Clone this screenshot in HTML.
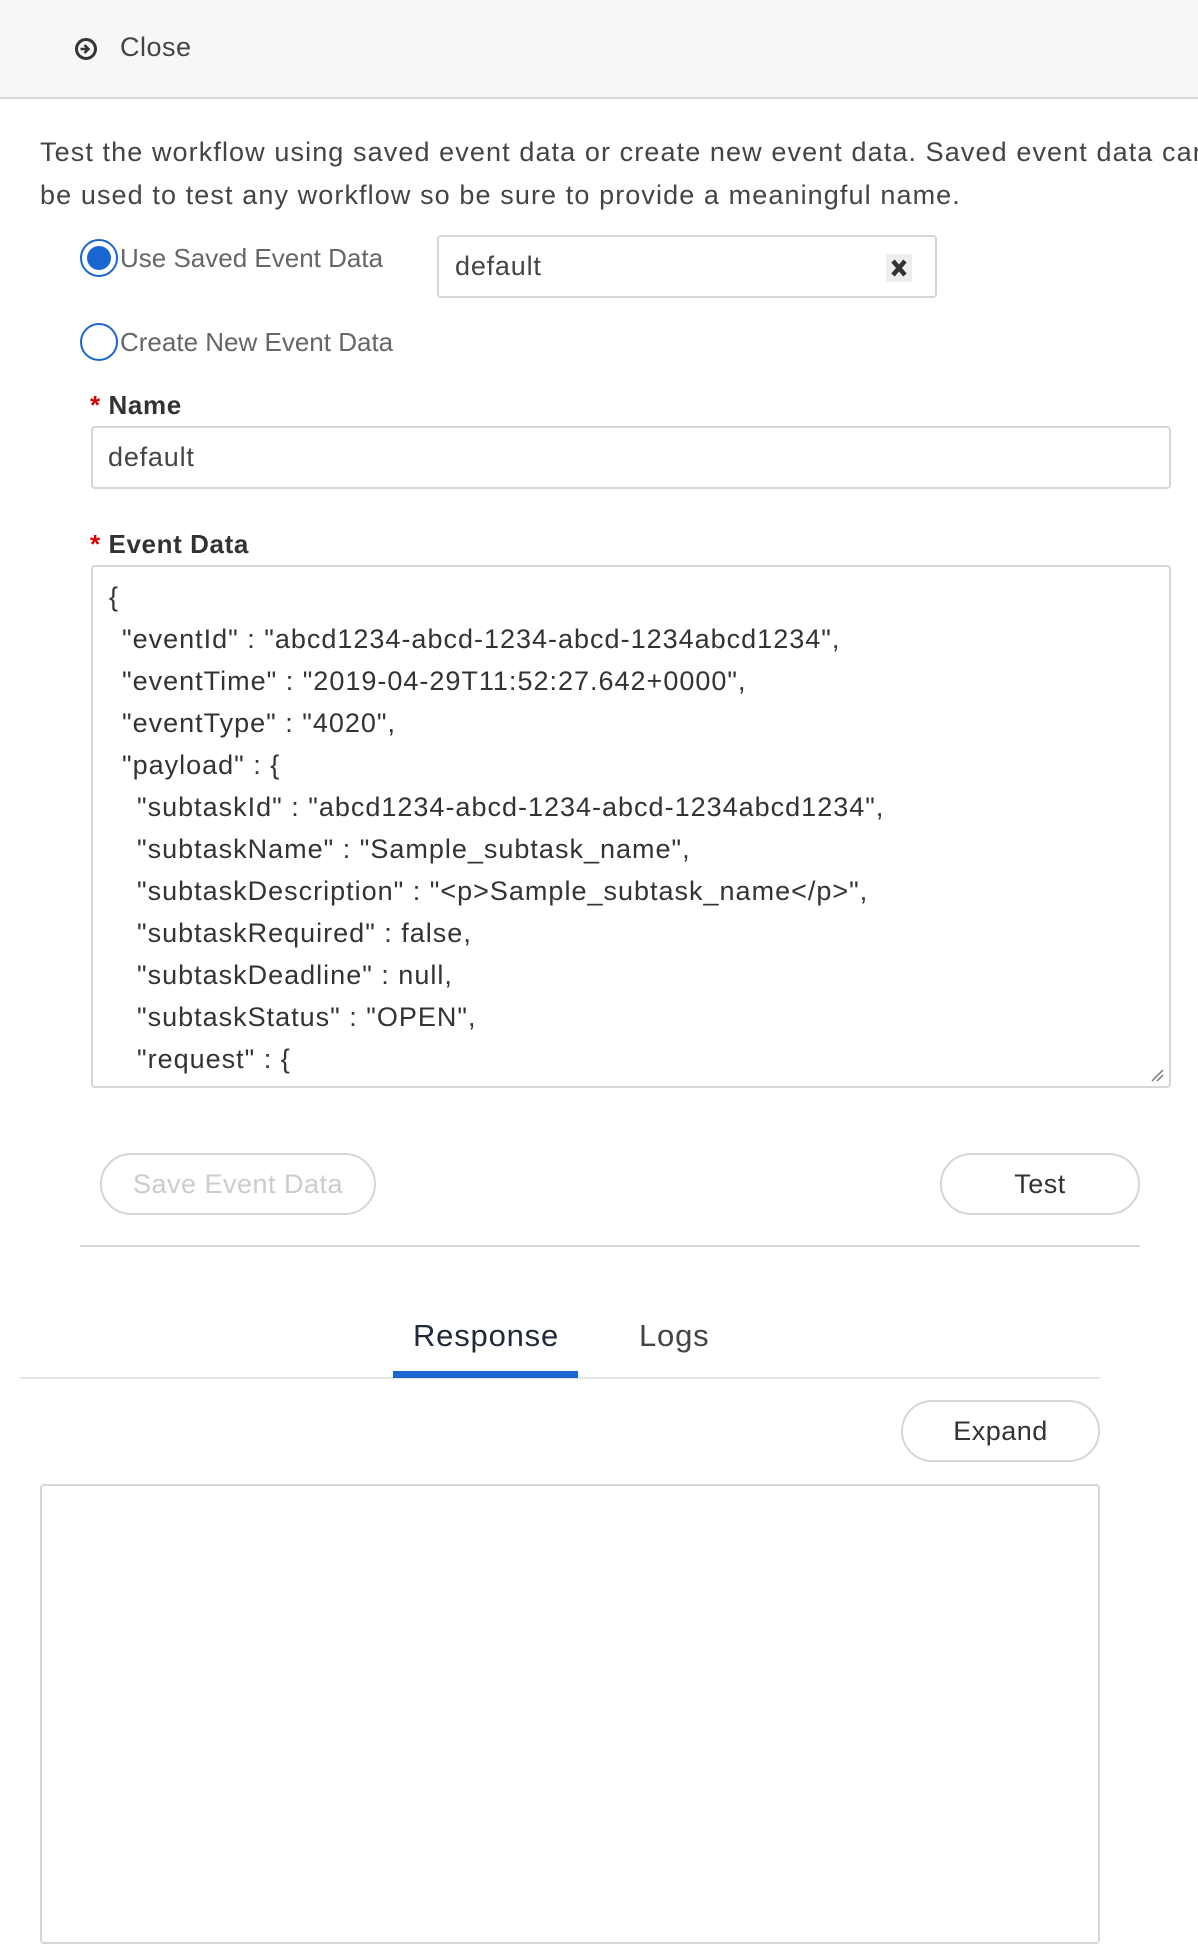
<!DOCTYPE html>
<html><head><meta charset="utf-8"><style>
body{margin:0;width:1198px;height:1918px;overflow:hidden;background:#fff;font-family:"Liberation Sans",sans-serif;color:#333;position:relative}
.a{position:absolute;white-space:nowrap}
.hdr{position:absolute;left:0;top:0;width:1198px;height:97px;background:#f7f7f7;border-bottom:2px solid #d9d9d9}
.box{position:absolute;border:2px solid #d6d6d6;border-radius:4px;box-sizing:border-box}
.radio{position:absolute;width:38px;height:38px;border:2px solid #1a66d1;border-radius:50%;box-sizing:border-box}
.btn{position:absolute;border:2px solid #d6d6d6;border-radius:31px;box-sizing:border-box;text-align:center;font-size:27px;line-height:58px;letter-spacing:.5px}
.code{position:absolute;left:109px;top:576px;font-size:27px;line-height:42px;color:#333;white-space:pre;letter-spacing:1px}
.code div.l1{padding-left:13px}.code div.l2{padding-left:28px}
</style></head><body>
<div class="hdr"></div>
<svg class="a" style="left:74px;top:37px" width="24" height="24" viewBox="0 0 24 24"><circle cx="12" cy="12" r="9.5" fill="none" stroke="#333" stroke-width="3"/><path d="M6.5 12h7M10.5 8l4 4-4 4" fill="none" stroke="#333" stroke-width="2.6"/></svg>
<div class="a" style="left:120px;top:32px;font-size:27px;color:#444;letter-spacing:.5px">Close</div>
<div class="a" style="left:40px;top:131px;font-size:27px;line-height:43px;color:#444;letter-spacing:1.1px">Test the workflow using saved event data or create new event data. Saved event data can<br>be used to test any workflow so be sure to provide a meaningful name.</div>
<div class="radio" style="left:80px;top:239px"></div>
<div class="a" style="left:87px;top:246px;width:24px;height:24px;border-radius:50%;background:#1a66d1"></div>
<div class="a" style="left:120px;top:243px;font-size:26px;color:#666">Use Saved Event Data</div>
<div class="box" style="left:437px;top:235px;width:500px;height:63px"></div>
<div class="a" style="left:455px;top:251px;font-size:27px;color:#444;letter-spacing:.8px">default</div>
<div class="a" style="left:886px;top:254px;width:26px;height:28px;background:#eee"></div>
<svg class="a" style="left:890px;top:258px" width="18" height="20" viewBox="0 0 18 20"><path d="M3 3l12 14M15 3L3 17" stroke="#333" stroke-width="4.5"/></svg>
<div class="radio" style="left:80px;top:323px"></div>
<div class="a" style="left:120px;top:327px;font-size:26px;color:#666">Create New Event Data</div>
<div class="a" style="left:90px;top:390px;font-size:26px;font-weight:bold;color:#333;letter-spacing:.6px"><span style="color:#d00">*</span> Name</div>
<div class="box" style="left:91px;top:426px;width:1080px;height:63px"></div>
<div class="a" style="left:108px;top:442px;font-size:27px;color:#444;letter-spacing:.8px">default</div>
<div class="a" style="left:90px;top:529px;font-size:26px;font-weight:bold;color:#333;letter-spacing:.6px"><span style="color:#d00">*</span> Event Data</div>
<div class="box" style="left:91px;top:565px;width:1080px;height:523px"></div>
<div class="code"><div>{</div><div class="l1">"eventId" : "abcd1234-abcd-1234-abcd-1234abcd1234",</div><div class="l1">"eventTime" : "2019-04-29T11:52:27.642+0000",</div><div class="l1">"eventType" : "4020",</div><div class="l1">"payload" : {</div><div class="l2">"subtaskId" : "abcd1234-abcd-1234-abcd-1234abcd1234",</div><div class="l2">"subtaskName" : "Sample_subtask_name",</div><div class="l2">"subtaskDescription" : "&lt;p&gt;Sample_subtask_name&lt;/p&gt;",</div><div class="l2">"subtaskRequired" : false,</div><div class="l2">"subtaskDeadline" : null,</div><div class="l2">"subtaskStatus" : "OPEN",</div><div class="l2">"request" : {</div></div>
<svg class="a" style="left:1150px;top:1068px" width="14" height="14"><path d="M2 13L13 2M7 13L13 7" stroke="#777" stroke-width="1.5"/></svg>
<div class="btn" style="left:100px;top:1153px;width:276px;height:62px;color:#ccc">Save Event Data</div>
<div class="btn" style="left:940px;top:1153px;width:200px;height:62px;color:#333">Test</div>
<div class="a" style="left:80px;top:1245px;width:1060px;height:2px;background:#d9d9d9"></div>
<div class="a" style="left:413px;top:1318px;font-size:31px;color:#1f2a3a;letter-spacing:.8px">Response</div>
<div class="a" style="left:639px;top:1318px;font-size:31px;color:#444;letter-spacing:.8px">Logs</div>
<div class="a" style="left:20px;top:1377px;width:1080px;height:2px;background:#e5e5e5"></div>
<div class="a" style="left:393px;top:1371px;width:185px;height:7px;background:#1a66d1"></div>
<div class="btn" style="left:901px;top:1400px;width:199px;height:62px;color:#333">Expand</div>
<div class="box" style="left:40px;top:1484px;width:1060px;height:460px"></div>
</body></html>
